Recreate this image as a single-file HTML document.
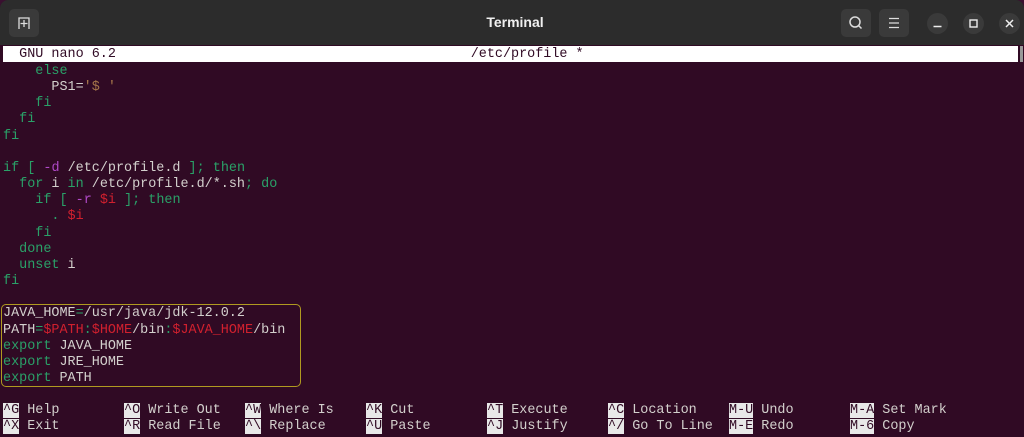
<!DOCTYPE html>
<html><head><meta charset="utf-8"><style>
html,body{margin:0;padding:0;background:#3a1030;}
body{width:1024px;height:437px;position:relative;overflow:hidden;font-family:"Liberation Mono",monospace;}
.win{position:absolute;left:0;top:0;width:1024px;height:437px;background:#300a24;border-radius:8px 8px 0 0;overflow:hidden}
.tb{position:absolute;left:0;top:0;width:1024px;height:45px;background:#2c2c2c;}
.title{position:absolute;left:0;width:1030px;top:14px;text-align:center;color:#f0f0f0;font:bold 14px "Liberation Sans",sans-serif}
.btn{position:absolute;top:9px;width:30px;height:28px;background:#3a3a3a;border-radius:5px}
.circ{position:absolute;top:13px;width:21px;height:21px;border-radius:50%;background:#3a3a3a}
.hdr{position:absolute;left:3px;top:46px;width:1015px;height:16px;background:#fff;color:#300a24;font-size:13.45px;line-height:18px;white-space:pre}
.t{position:absolute;left:3px;top:64px;color:#d3d0cd;font-size:13.45px;line-height:16.15px;white-space:pre}
.g{color:#2aa168}.r{color:#d0202e}.p{color:#b04ac8}.b{color:#a5754a}
.box{position:absolute;left:1px;top:304px;width:298px;height:81px;border:1.5px solid #b09a20;border-radius:5px}
.k{background:#e8e8e8;color:#300a24}
.sc{position:absolute;color:#d3d0cd;font-size:13.45px;line-height:16.15px;white-space:pre}
.sb{position:absolute;left:1020px;top:46px;width:3px;height:16px;background:#999}
</style></head><body><div class="win">
<div class="tb">
<div class="btn" style="left:9px"><svg width="30" height="28"><path d="M10 20V9h10v11M15 11v7M11.5 14.5h7" stroke="#ddd" stroke-width="1.3" fill="none"/></svg></div>
<div class="title">Terminal</div>
<div class="btn" style="left:841px"><svg width="30" height="28"><circle cx="14" cy="13" r="5" stroke="#ddd" stroke-width="1.5" fill="none"/><path d="M17.5 16.5l3 3" stroke="#ddd" stroke-width="1.5"/></svg></div>
<div class="btn" style="left:879px"><svg width="30" height="28"><path d="M10 9.5h10M10 14h10M10 18.5h10" stroke="#ddd" stroke-width="1.3"/></svg></div>
<div class="circ" style="left:927px"><svg width="21" height="21"><path d="M6.5 13.5h8" stroke="#eee" stroke-width="1.5"/></svg></div>
<div class="circ" style="left:963px"><svg width="21" height="21"><rect x="7" y="7" width="7" height="7" stroke="#eee" stroke-width="1.4" fill="none"/></svg></div>
<div class="circ" style="left:999px"><svg width="21" height="21"><path d="M7 7l7 7M14 7l-7 7" stroke="#eee" stroke-width="1.5"/></svg></div>
</div>
<div class="hdr">  GNU nano 6.2                                            /etc/profile *</div>
<div class="sb"></div>
<div class="t">    <span class="g">else</span>
      PS1=<span class="b">'$ '</span>
    <span class="g">fi</span>
  <span class="g">fi</span>
<span class="g">fi</span>

<span class="g">if</span> <span class="g">[</span> <span class="p">-d</span> /etc/profile.d <span class="g">];</span> <span class="g">then</span>
  <span class="g">for</span> i <span class="g">in</span> /etc/profile.d/*.sh<span class="g">;</span> <span class="g">do</span>
    <span class="g">if</span> <span class="g">[</span> <span class="p">-r</span> <span class="r">$i</span> <span class="g">];</span> <span class="g">then</span>
      <span class="g">.</span> <span class="r">$i</span>
    <span class="g">fi</span>
  <span class="g">done</span>
  <span class="g">unset</span> i
<span class="g">fi</span>

JAVA_HOME<span class="g">=</span>/usr/java/jdk-12.0.2
PATH<span class="g">=</span><span class="r">$PATH</span><span class="g">:</span><span class="r">$HOME</span>/bin<span class="g">:</span><span class="r">$JAVA_HOME</span>/bin
<span class="g">export</span> JAVA_HOME
<span class="g">export</span> JRE_HOME
<span class="g">export</span> PATH</div>
<div class="box"></div>
<div class="sc" style="left:3px;top:403px"><span class="k">^G</span> Help
<span class="k">^X</span> Exit</div>
<div class="sc" style="left:124px;top:403px"><span class="k">^O</span> Write Out
<span class="k">^R</span> Read File</div>
<div class="sc" style="left:245px;top:403px"><span class="k">^W</span> Where Is
<span class="k">^\</span> Replace</div>
<div class="sc" style="left:366px;top:403px"><span class="k">^K</span> Cut
<span class="k">^U</span> Paste</div>
<div class="sc" style="left:487px;top:403px"><span class="k">^T</span> Execute
<span class="k">^J</span> Justify</div>
<div class="sc" style="left:608px;top:403px"><span class="k">^C</span> Location
<span class="k">^/</span> Go To Line</div>
<div class="sc" style="left:729px;top:403px"><span class="k">M-U</span> Undo
<span class="k">M-E</span> Redo</div>
<div class="sc" style="left:850px;top:403px"><span class="k">M-A</span> Set Mark
<span class="k">M-6</span> Copy</div>
</div></body></html>
